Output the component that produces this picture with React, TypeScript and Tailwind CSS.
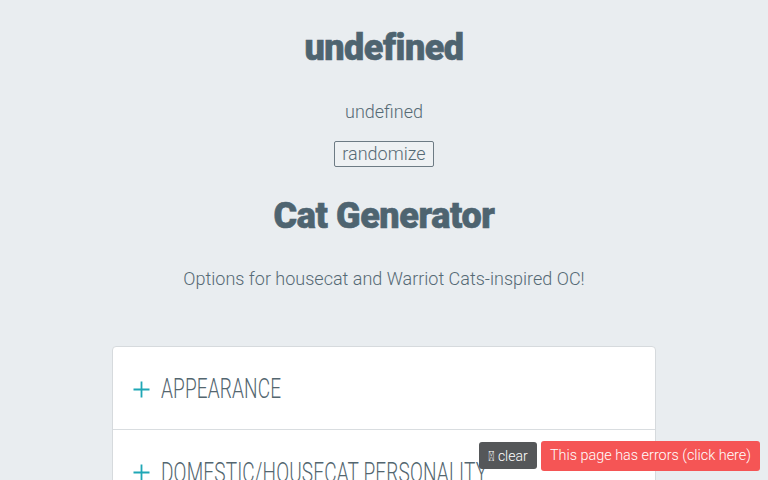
import React from "react";

function Row({ label }: { label: string }) {
  return (
    <div className="flex items-center h-[83px] px-[20px] border-b border-[#d9dde0] last:border-b-0 overflow-hidden">
      <svg width="17" height="17" viewBox="0 0 17 17" className="mr-[11px] shrink-0 relative top-[1px]">
        <path d="M8.5 0.5v16M0.5 8.5h16" stroke="#1fa7b6" strokeWidth="1.8" fill="none" />
      </svg>
      <span className="inline-block origin-left scale-x-[0.68] whitespace-nowrap text-[#53666f] text-[28px] font-light tracking-[0.2px] relative top-[1px]" style={{ fontFamily: "Roboto, sans-serif" }}>{label}</span>
    </div>
  );
}

export default function App() {
  return (
    <div className="h-[480px] overflow-hidden bg-[#e9edf0] relative" style={{ fontFamily: "Roboto, sans-serif" }}>
      <div className="flex flex-col items-center">
        <h1 className="mt-[24px] text-[36px] leading-[48px] font-black text-[#4e6470] tracking-[-0.5px] [-webkit-text-stroke:0.6px_#4e6470]">undefined</h1>
        <p className="mt-[26px] text-[18px] leading-[27px] font-light text-[#566a75]">undefined</p>
        <button className="mt-[16px] border border-[#6d7b84] rounded-[2px] px-[7px] h-[26px] text-[18px] font-light text-[#566a75] bg-[#eef1f3] leading-none">randomize</button>
        <h2 className="mt-[25px] text-[36px] leading-[48px] font-black text-[#4e6470] tracking-[-0.4px] [-webkit-text-stroke:0.6px_#4e6470]">Cat Generator</h2>
        <p className="mt-[25px] text-[18px] leading-[27px] font-light text-[#566a75]">Options for housecat and Warriot Cats-inspired OC!</p>
        <div className="mt-[54px] w-[544px] bg-white border border-[#d6dadd] rounded-[4px] flex flex-col">
          <Row label="APPEARANCE" />
          <Row label="DOMESTIC/HOUSECAT PERSONALITY" />
        </div>
      </div>
      <div className="absolute left-[479px] top-[441px] flex items-start gap-[4px]">
        <button className="mt-[1px] h-[27px] w-[58px] rounded-[3px] bg-[#555759] text-white text-[14px] font-light leading-none">&#xf00d; clear</button>
        <button className="h-[30px] w-[219px] rounded-[3px] bg-[#f55555] text-white text-[14.4px] font-light leading-none">This page has errors (click here)</button>
      </div>
    </div>
  );
}
